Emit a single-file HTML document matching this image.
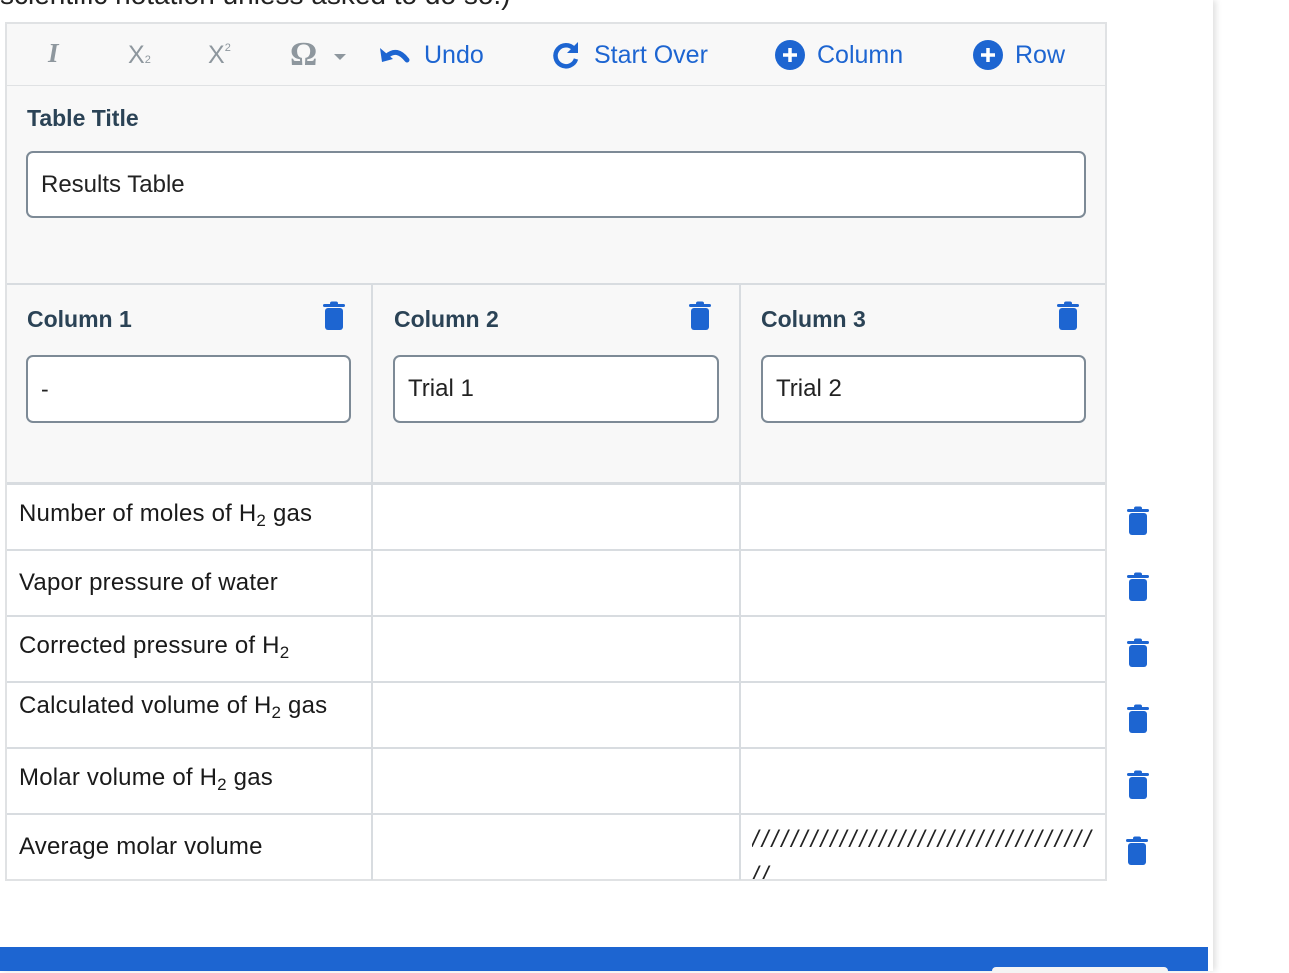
<!DOCTYPE html>
<html><head><meta charset="utf-8">
<style>
*{margin:0;padding:0;box-sizing:border-box}
body{width:1289px;height:971px;overflow:hidden;background:#fff;font-family:"Liberation Sans",sans-serif;position:relative}
.a{position:absolute}
.page{left:0;top:0;width:1213px;height:971px;background:#fff;box-shadow:3px 0 6px rgba(0,0,0,0.12)}
.tb{left:5px;top:22px;width:1102px;height:65px;background:#f8f8f8;border:2px solid #e0e2e4}
.tool{top:41px;font-size:25px;color:#1d65d1;white-space:nowrap}
.g{color:#8e979e}
.panel{left:5px;top:86px;width:1102px;height:795px;border:2px solid #e0e2e4;border-top:none;background:#fff}
.hdr{color:#2b4356;font-weight:bold;font-size:23px}
.inp{background:#fff;border:2px solid #7d8a96;border-radius:7px;font-size:23px;color:#222;padding-left:13px;display:flex;align-items:center}
.lbl{font-size:24px;color:#1a1a1a;white-space:nowrap;letter-spacing:0.2px}
.hl{background:#d8dce0}
sub{font-size:17px;vertical-align:-5px;line-height:0}
.sl{white-space:nowrap;font-size:24px;color:#222;letter-spacing:3.1px;font-style:italic;line-height:36px}
</style></head><body>
<div class="a page"></div>
<div class="a" style="left:0;top:-21px;font-size:28px;color:#222;white-space:nowrap">scientific notation unless asked to do so.)</div>

<div class="a tb"></div>
<div class="a" style="left:258px;top:24px;width:847px;height:61px;background:#f8f8f8"></div>
<div class="a tool g" style="left:48px;top:38px;font-style:italic;font-weight:bold;font-family:'Liberation Serif',serif;font-size:27px">I</div>
<div class="a tool g" style="left:128px">X<span style="font-size:11px">2</span></div>
<div class="a tool g" style="left:208px">X<sup style="font-size:11px;vertical-align:12px">2</sup></div>
<div class="a tool g" style="left:290px;top:36px;font-family:'Liberation Serif',serif;font-size:34px;font-weight:bold">Ω</div>
<svg class="a" style="left:334px;top:54px" width="12" height="7"><path d="M0 0H12L6 6Z" fill="#8e979e"/></svg>
<svg class="a" style="left:379px;top:44px" width="32" height="22" viewBox="0 0 32 22"><path d="M8 12 Q18 3 28 16" stroke="#1d65d1" stroke-width="5" fill="none" stroke-linecap="round"/><path d="M1 4 L3 18 L14 15Z" fill="#1d65d1"/></svg>
<div class="a tool" style="left:424px">Undo</div>
<svg class="a" style="left:551px;top:40px" width="30" height="30" viewBox="0 0 30 30"><path d="M23 9 A10.5 10.5 0 1 0 25 19" stroke="#1d65d1" stroke-width="4.5" fill="none"/><path d="M27 2 L27 13 L16 13Z" fill="#1d65d1"/></svg>
<div class="a tool" style="left:594px">Start Over</div>
<svg class="a" style="left:775px;top:40px" width="30" height="30"><circle cx="15" cy="15" r="15" fill="#1d65d1"/><path d="M15 8V22M8 15H22" stroke="#fff" stroke-width="3.5"/></svg>
<div class="a tool" style="left:817px">Column</div>
<svg class="a" style="left:973px;top:40px" width="30" height="30"><circle cx="15" cy="15" r="15" fill="#1d65d1"/><path d="M15 8V22M8 15H22" stroke="#fff" stroke-width="3.5"/></svg>
<div class="a tool" style="left:1015px">Row</div>

<div class="a panel"></div>
<div class="a" style="left:7px;top:86px;width:1098px;height:197px;background:#f8f8f8"></div>
<div class="a hdr" style="left:27px;top:105px">Table Title</div>
<div class="a inp" style="left:26px;top:151px;width:1060px;height:67px;font-size:24px">Results Table</div>

<div class="a hl" style="left:7px;top:283px;width:1098px;height:2px"></div>
<div class="a" style="left:7px;top:285px;width:1098px;height:197px;background:#f8f8f8"></div>
<div class="a hl" style="left:371px;top:285px;width:2px;height:595px"></div>
<div class="a hl" style="left:739px;top:285px;width:2px;height:595px"></div>
<div class="a hl" style="left:7px;top:482px;width:1098px;height:3px"></div>
<div class="a hl" style="left:7px;top:549px;width:1098px;height:2px"></div>
<div class="a hl" style="left:7px;top:615px;width:1098px;height:2px"></div>
<div class="a hl" style="left:7px;top:681px;width:1098px;height:2px"></div>
<div class="a hl" style="left:7px;top:747px;width:1098px;height:2px"></div>
<div class="a hl" style="left:7px;top:813px;width:1098px;height:2px"></div>

<div class="a hdr" style="left:27px;top:306px">Column 1</div>
<div class="a hdr" style="left:394px;top:306px">Column 2</div>
<div class="a hdr" style="left:761px;top:306px">Column 3</div>
<div class="a inp" style="left:26px;top:355px;width:325px;height:68px">-</div>
<div class="a inp" style="left:393px;top:355px;width:326px;height:68px;font-size:24px">Trial 1</div>
<div class="a inp" style="left:761px;top:355px;width:325px;height:68px;font-size:24px">Trial 2</div>

<div class="a lbl" style="left:19px;top:500px">Number of moles of H<sub>2</sub> gas</div>
<div class="a lbl" style="left:19px;top:569px">Vapor pressure of water</div>
<div class="a lbl" style="left:19px;top:632px">Corrected pressure of H<sub>2</sub></div>
<div class="a lbl" style="left:19px;top:692px">Calculated volume of H<sub>2</sub> gas</div>
<div class="a lbl" style="left:19px;top:764px">Molar volume of H<sub>2</sub> gas</div>
<div class="a lbl" style="left:19px;top:833px">Average molar volume</div>
<div class="a" style="left:752px;top:822px;width:350px;height:57px;overflow:hidden">
<div class="sl">///////////////////////////////////</div>
<div class="sl">//</div>
</div>

<svg width="0" height="0" style="position:absolute"><defs><g id="t"><rect x="0" y="3" width="22" height="3" rx="1.5" fill="#1d65d1"/><rect x="7" y="0.5" width="8" height="4" rx="2" fill="#1d65d1"/><rect x="2" y="7" width="18" height="22" rx="3" fill="#1d65d1"/></g></defs></svg>
<svg class="a" style="left:323px;top:301px" width="22" height="30"><use href="#t"/></svg>
<svg class="a" style="left:689px;top:301px" width="22" height="30"><use href="#t"/></svg>
<svg class="a" style="left:1057px;top:301px" width="22" height="30"><use href="#t"/></svg>
<svg class="a" style="left:1127px;top:506px" width="22" height="30"><use href="#t"/></svg>
<svg class="a" style="left:1127px;top:572px" width="22" height="30"><use href="#t"/></svg>
<svg class="a" style="left:1127px;top:638px" width="22" height="30"><use href="#t"/></svg>
<svg class="a" style="left:1127px;top:704px" width="22" height="30"><use href="#t"/></svg>
<svg class="a" style="left:1127px;top:770px" width="22" height="30"><use href="#t"/></svg>
<svg class="a" style="left:1126px;top:836px" width="22" height="30"><use href="#t"/></svg>

<div class="a" style="left:0;top:947px;width:1208px;height:24px;background:#1d65d1"></div>
<div class="a" style="left:992px;top:967px;width:176px;height:6px;background:#f4f4f4;border-radius:4px 4px 0 0"></div>
</body></html>
